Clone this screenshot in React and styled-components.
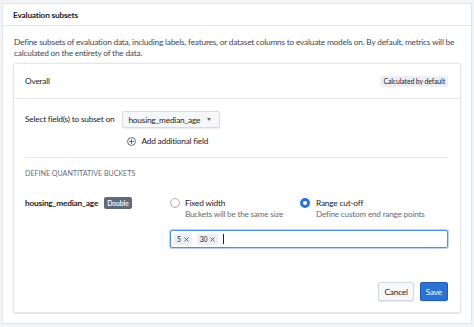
import React from "react";
import styled, { createGlobalStyle } from "styled-components";

const GlobalStyle = createGlobalStyle`
  html, body {
    margin: 0;
    padding: 0;
    background: #f3f4f6;
  }
  body {
    font-family: "Source Sans Pro", Lato, "Noto Sans", sans-serif;
    color: #1c2127;
    letter-spacing: -0.2px;
    -webkit-font-smoothing: antialiased;
  }
`;

const Page = styled.div`
  padding: 3px 2px 3px 2px;
`;

const Panel = styled.div`
  background: #ffffff;
  border: 1px solid #e1e4e8;
  box-sizing: border-box;
  height: 321px;
`;

const PanelHeader = styled.div`
  height: 21px;
  display: flex;
  align-items: center;
  padding: 0 10px;
  border-bottom: 1px solid #e1e4e8;
  font-size: 8.3px;
  font-weight: 700;
`;

const PanelBody = styled.div`
  padding: 11px 10px 10px;
`;

const Description = styled.p`
  margin: 0 0 5px;
  font-size: 8.3px;
  line-height: 10.6px;
  color: #404854;
  padding-left: 1px;
`;

const Card = styled.div`
  border: 1px solid #e5e8eb;
  border-radius: 2px;
  box-shadow: 0 0 0 1px rgba(17, 20, 24, 0.02), 0 1px 1px rgba(17, 20, 24, 0.08);
`;

const CardHeader = styled.div`
  height: 34px;
  display: flex;
  align-items: center;
  justify-content: space-between;
  padding: 0 12px 0 11px;
  border-bottom: 1px solid #e5e8eb;
  font-size: 8.3px;
`;

const Tag = styled.span`
  display: inline-flex;
  align-items: center;
  height: ${(p) => p.h || 11}px;
  padding: 0 3px;
  border-radius: 2px;
  font-size: 6.9px;
  letter-spacing: -0.1px;
  background: ${(p) => (p.dark ? "#5f6b7c" : "#edeff2")};
  color: ${(p) => (p.dark ? "#ffffff" : "#1c2127")};
  font-weight: ${(p) => (p.dark ? 600 : 400)};
`;

const CardBody = styled.div`
  padding: 12px 12px 11px 11px;
`;

const FieldRow = styled.div`
  display: flex;
  align-items: flex-start;
  gap: 8px;
  font-size: 8.3px;
`;

const FieldLabel = styled.span`
  line-height: 17px;
`;

const FieldControls = styled.div`
  display: flex;
  flex-direction: column;
`;

const Select = styled.div`
  width: 98px;
  height: 17px;
  box-sizing: border-box;
  display: flex;
  align-items: center;
  justify-content: space-between;
  padding: 0 8px 0 5px;
  background: #f6f7f9;
  border: 1px solid #d8dce0;
  border-radius: 2px;
  box-shadow: 0 1px 1px rgba(17, 20, 24, 0.08);
  font-size: 8.3px;
`;

const Caret = styled.span`
  width: 0;
  height: 0;
  border-left: 2.5px solid transparent;
  border-right: 2.5px solid transparent;
  border-top: 3px solid #5f6b7c;
`;

const AddLink = styled.div`
  display: flex;
  align-items: center;
  gap: 5px;
  margin-top: 7px;
  padding-left: 5px;
  height: 12px;
  font-size: 8.3px;
`;

const Divider = styled.div`
  height: 1px;
  background: #e5e8eb;
  margin: 10px 0 0;
`;

const SectionTitle = styled.div`
  margin-top: 10px;
  font-size: 7.1px;
  color: #5f6b7c;
  letter-spacing: 0;
  line-height: 12px;
`;

const BucketGrid = styled.div`
  display: grid;
  grid-template-columns: 145px 1fr;
  align-items: start;
  margin-top: 17px;
`;

const FieldName = styled.div`
  display: flex;
  align-items: center;
  gap: 6px;
  height: 12px;
  font-size: 8.3px;
  font-weight: 700;
`;

const Options = styled.div`
  display: flex;
`;

const Option = styled.div`
  width: ${(p) => p.w}px;
  display: grid;
  grid-template-columns: ${(p) => p.gap}px 1fr;
  align-content: start;
`;

const Radio = styled.span`
  width: 10px;
  height: 10px;
  margin-top: 1px;
  box-sizing: border-box;
  border-radius: 50%;
  border: ${(p) => (p.checked ? "3px solid #2d72d2" : "1px solid #abb3bf")};
  background: #ffffff;
  box-shadow: ${(p) => (p.checked ? "none" : "inset 0 -1px 0 rgba(17,20,24,0.1)")};
`;

const OptionLabel = styled.div`
  font-size: 8.3px;
  line-height: 12px;
`;

const OptionHint = styled.div`
  grid-column: 2;
  font-size: 8.2px;
  line-height: 10px;
  color: #5f6b7c;
  white-space: nowrap;
`;

const TagInput = styled.div`
  grid-column: 2;
  margin-top: 11px;
  height: 18px;
  box-sizing: border-box;
  display: flex;
  align-items: center;
  gap: 5px;
  padding: 0 3px;
  border: 1px solid #4c90f0;
  border-radius: 2px;
  box-shadow: 0 0 0 1px rgba(45, 114, 210, 0.3);
  background: #ffffff;
`;

const Chip = styled.span`
  display: inline-flex;
  align-items: center;
  gap: 3px;
  height: 11px;
  padding: 0 3px;
  border-radius: 2px;
  background: #edeff2;
  font-size: 6.8px;
  color: #1c2127;
`;

const Cursor = styled.span`
  width: 1px;
  height: 10px;
  background: #1c2127;
`;

const Actions = styled.div`
  display: flex;
  justify-content: flex-end;
  gap: 6px;
  margin-top: 34px;
`;

const Button = styled.button`
  height: 19px;
  padding: 0 5px;
  border-radius: 2px;
  font-family: inherit;
  letter-spacing: -0.2px;
  font-size: 8.3px;
  border: 1px solid ${(p) => (p.primary ? "#215db0" : "#d3d8de")};
  background: ${(p) => (p.primary ? "#2d72d2" : "#f6f7f9")};
  color: ${(p) => (p.primary ? "#ffffff" : "#1c2127")};
  box-shadow: 0 1px 1px rgba(17, 20, 24, 0.1);
`;

const X = () => (
  <svg width="5" height="5" viewBox="0 0 10 10">
    <path d="M1.5 1.5L8.5 8.5M8.5 1.5L1.5 8.5" stroke="#404854" strokeWidth="1.6" strokeLinecap="round" />
  </svg>
);

const PlusCircle = () => (
  <svg width="9" height="9" viewBox="0 0 16 16">
    <circle cx="8" cy="8" r="7" fill="none" stroke="#404854" strokeWidth="1.4" />
    <path d="M8 4.5v7M4.5 8h7" stroke="#404854" strokeWidth="1.4" strokeLinecap="round" />
  </svg>
);

export default function App() {
  return (
    <>
      <GlobalStyle />
      <Page>
        <Panel>
          <PanelHeader>Evaluation subsets</PanelHeader>
          <PanelBody>
            <Description>
              Define subsets of evaluation data, including labels, features, or dataset columns to evaluate models on. By default, metrics will be calculated on the entirety of the data.
            </Description>
            <Card>
              <CardHeader>
                <span>Overall</span>
                <Tag>Calculated by default</Tag>
              </CardHeader>
              <CardBody>
                <FieldRow>
                  <FieldLabel>Select field(s) to subset on</FieldLabel>
                  <FieldControls>
                    <Select>
                      <span>housing_median_age</span>
                      <Caret />
                    </Select>
                    <AddLink>
                      <PlusCircle />
                      <span>Add additional field</span>
                    </AddLink>
                  </FieldControls>
                </FieldRow>
                <Divider />
                <SectionTitle>DEFINE QUANTITATIVE BUCKETS</SectionTitle>
                <BucketGrid>
                  <FieldName>
                    housing_median_age
                    <Tag dark h={12}>Double</Tag>
                  </FieldName>
                  <Options>
                    <Option w={130} gap={15}>
                      <Radio />
                      <OptionLabel>Fixed width</OptionLabel>
                      <OptionHint>Buckets will be the same size</OptionHint>
                    </Option>
                    <Option w={148} gap={16}>
                      <Radio checked />
                      <OptionLabel>Range cut-off</OptionLabel>
                      <OptionHint>Define custom end range points</OptionHint>
                    </Option>
                  </Options>
                  <TagInput>
                    <Chip>5 <X /></Chip>
                    <Chip>30 <X /></Chip>
                    <Cursor />
                  </TagInput>
                </BucketGrid>
                <Actions>
                  <Button>Cancel</Button>
                  <Button primary>Save</Button>
                </Actions>
              </CardBody>
            </Card>
          </PanelBody>
        </Panel>
      </Page>
    </>
  );
}
